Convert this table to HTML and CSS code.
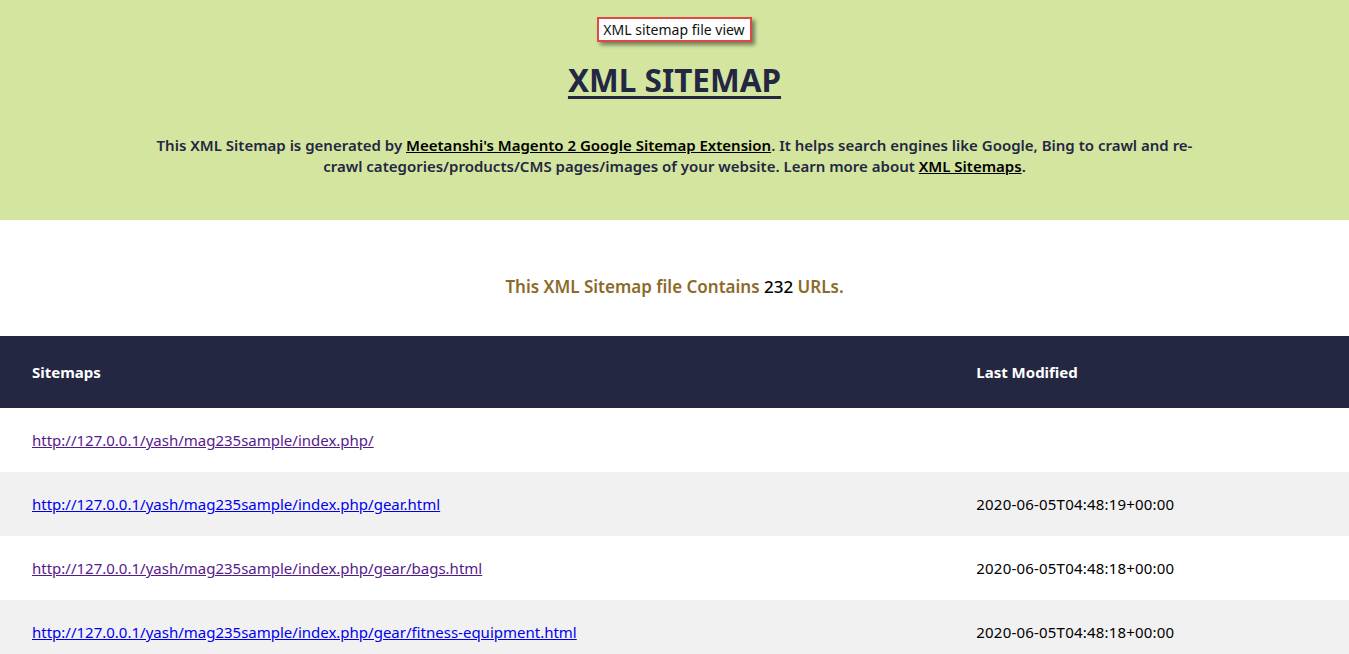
FILE: index.html
```html
<!DOCTYPE html>
<html lang="en">
<head>
<meta charset="utf-8">
<title>XML Sitemap</title>
<link rel="stylesheet" href="styles.css">
</head>
<body>
<header class="hero">
  <div class="note">XML sitemap file view</div>
  <h1 class="title"><a href="#">XML SITEMAP</a></h1>
  <p class="intro">This XML Sitemap is generated by <a href="#">Meetanshi's Magento 2 Google Sitemap Extension</a>. It helps search engines like Google, Bing to crawl and re-crawl categories/products/CMS pages/images of your website. Learn more about <a href="#">XML Sitemaps</a>.</p>
</header>
<section class="count">This XML Sitemap file Contains <span class="num">232</span> URLs.</section>
<div class="table">
  <div class="row head">
    <div class="cell">Sitemaps</div>
    <div class="cell">Last Modified</div>
  </div>
  <div class="row">
    <div class="cell"><a class="visited" href="#">http://127.0.0.1/yash/mag235sample/index.php/</a></div>
    <div class="cell"></div>
  </div>
  <div class="row alt">
    <div class="cell"><a class="link" href="#">http://127.0.0.1/yash/mag235sample/index.php/gear.html</a></div>
    <div class="cell date">2020-06-05T04:48:19+00:00</div>
  </div>
  <div class="row">
    <div class="cell"><a class="visited" href="#">http://127.0.0.1/yash/mag235sample/index.php/gear/bags.html</a></div>
    <div class="cell date">2020-06-05T04:48:18+00:00</div>
  </div>
  <div class="row alt">
    <div class="cell"><a class="link" href="#">http://127.0.0.1/yash/mag235sample/index.php/gear/fitness-equipment.html</a></div>
    <div class="cell date">2020-06-05T04:48:18+00:00</div>
  </div>
</div>
</body>
</html>
```
FILE: styles.css
```css
* { box-sizing: border-box; }
body {
  margin: 0;
  font-family: "Noto Sans", "Open Sans", sans-serif;
  color: #000;
  background: #fff;
}
.hero {
  background: #d4e5a0;
  height: 220px;
  display: flex;
  flex-direction: column;
  align-items: center;
  padding-top: 17px;
}
.note {
  font-size: 14px;
  line-height: 19px;
  padding: 1px 5px 1px 4px;
  background: #fff;
  border: 2px solid #e04848;
  box-shadow: 3px 3px 4px rgba(0,0,0,0.45);
  color: #111;
}
.title {
  margin: 16px 0 0;
  font-size: 31.5px;
  line-height: 44px;
  font-weight: 700;
}
.title a {
  color: #232742;
  text-decoration: underline;
  text-decoration-thickness: 3px;
  text-underline-offset: 4px;
}
.intro {
  margin: 33px 0 0;
  max-width: 1040px;
  text-align: center;
  font-size: 15px;
  line-height: 21px;
  font-weight: 600;
  color: #232742;
}
.intro a { color: #000; }
.count {
  height: 116px;
  display: flex;
  align-items: center;
  justify-content: center;
  font-size: 17px;
  font-weight: 600;
  color: #8b6a2a;
  padding-top: 16px;
  white-space: pre;
}
.count .num { color: #000; font-weight: 500; }
.table { width: 100%; }
.row {
  display: grid;
  grid-template-columns: 70% 30%;
  height: 64px;
  align-items: center;
  font-size: 15px;
}
.row.head {
  background: #232742;
  color: #fff;
  font-weight: 700;
  height: 72px;
}
.row.alt { background: #f1f1f1; }
.cell { padding-left: 32px; }
.date { letter-spacing: 0.2px; }
.visited { color: #551a8b; }
.link { color: #0000ee; }
```
